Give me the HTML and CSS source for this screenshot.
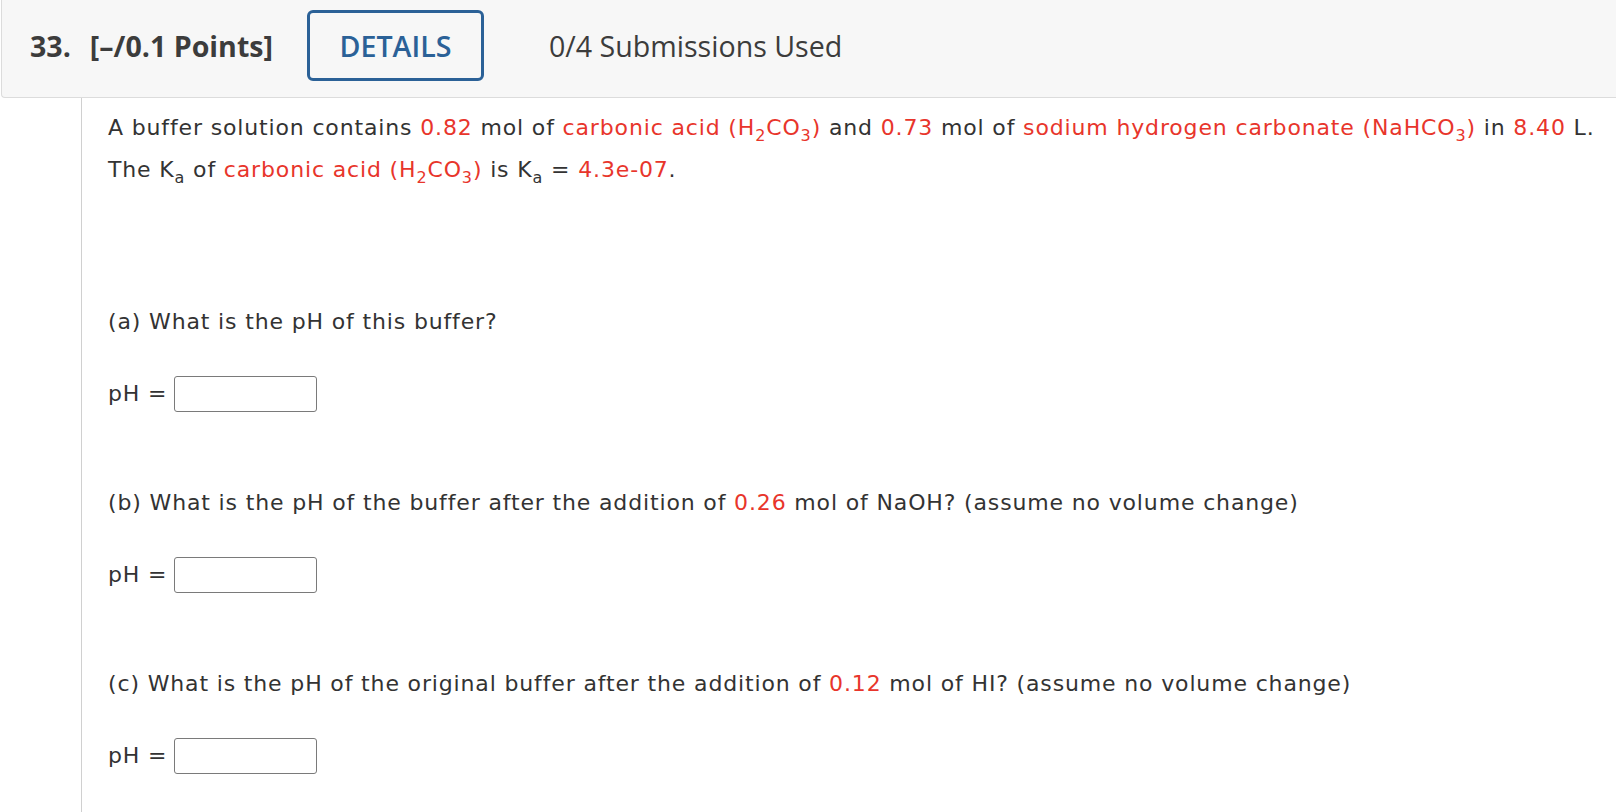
FILE: index.html
```html
<!DOCTYPE html>
<html>
<head>
<meta charset="utf-8">
<link rel="stylesheet" href="styles.css">
</head>
<body>
<div class="header">
  <span class="qnum">33.</span>
  <span class="points">[–/0.1 Points]</span>
  <button class="details">DETAILS</button>
  <span class="subs">0/4 Submissions Used</span>
</div>
<div class="content">
  <p class="intro">A buffer solution contains <span class="r">0.82</span> mol of <span class="r">carbonic acid (H<sub>2</sub>CO<sub>3</sub>)</span> and <span class="r">0.73</span> mol of <span class="r">sodium hydrogen carbonate (NaHCO<sub>3</sub>)</span> in <span class="r">8.40</span> L.<br>The K<sub>a</sub> of <span class="r">carbonic acid (H<sub>2</sub>CO<sub>3</sub>)</span> is K<sub>a</sub> = <span class="r">4.3e-07</span>.</p>
  <div class="part part-a">
    <p class="question">(a) What is the pH of this buffer?</p>
    <div class="answer"><span>pH =</span><input class="box" type="text"></div>
  </div>
  <div class="part">
    <p class="question">(b) What is the pH of the buffer after the addition of <span class="r">0.26</span> mol of NaOH? (assume no volume change)</p>
    <div class="answer"><span>pH =</span><input class="box" type="text"></div>
  </div>
  <div class="part">
    <p class="question">(c) What is the pH of the original buffer after the addition of <span class="r">0.12</span> mol of HI? (assume no volume change)</p>
    <div class="answer"><span>pH =</span><input class="box" type="text"></div>
  </div>
</div>
</body>
</html>
```
FILE: styles.css
```css
html, body {
  margin: 0;
  padding: 0;
  background: #fff;
  overflow: hidden;
}
body {
  width: 1616px;
  height: 812px;
}
.header {
  margin-left: 1px;
  height: 98px;
  box-sizing: border-box;
  background: #f7f7f7;
  border-left: 1px solid #dcdcdc;
  border-bottom: 1px solid #dcdcdc;
  border-bottom-left-radius: 4px;
  display: flex;
  align-items: center;
  padding: 10px 0 16px 28px;
  font-family: "Open Sans", sans-serif;
  font-size: 28.6px;
  color: #3c3c3c;
}
.qnum {
  font-weight: 700;
  margin-right: 19px;
}
.points {
  font-weight: 700;
  margin-right: 34px;
}
.details {
  width: 177px;
  height: 71px;
  box-sizing: border-box;
  border: 3px solid #2b6197;
  border-radius: 6px;
  background: #f7f7f7;
  color: #2b6197;
  font-family: "Open Sans", sans-serif;
  font-size: 28.6px;
  font-weight: 600;
  padding: 0;
  margin-right: 65px;
}
.subs {
  font-weight: 400;
}
.content {
  margin-left: 81px;
  border-left: 1px solid #d0d0d0;
  padding: 9px 0 0 26px;
  height: 714px;
  font-family: "DejaVu Sans", Verdana, sans-serif;
  font-size: 22px;
  letter-spacing: 0.85px;
  line-height: 42px;
  color: #333;
}
.content p {
  margin: 0;
  white-space: nowrap;
}
.r {
  color: #e8352b;
}
sub {
  font-size: 16px;
  line-height: 0;
  vertical-align: -6px;
}
.part-a {
  margin-top: 110px;
}
.part + .part {
  margin-top: 70px;
}
.answer {
  margin-top: 33px;
  height: 36px;
  display: flex;
  align-items: center;
  gap: 7px;
  line-height: 36px;
}
.box {
  width: 143px;
  height: 36px;
  box-sizing: border-box;
  border: 1px solid #7a7a7a;
  border-radius: 3px;
  background: #fff;
  margin: 0;
  padding: 0;
}
```
